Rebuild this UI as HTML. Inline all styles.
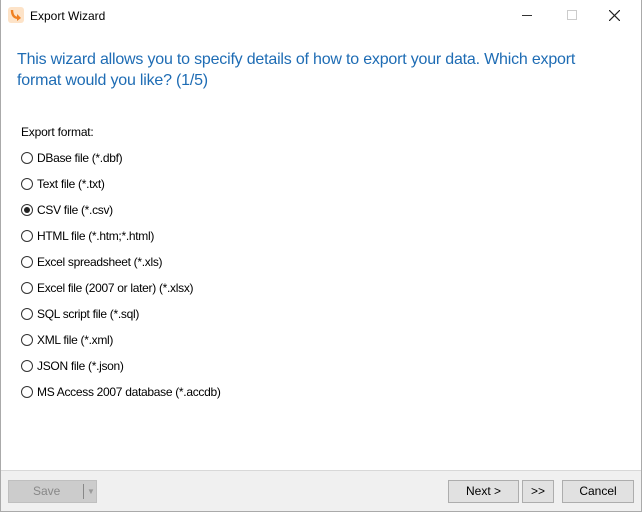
<!DOCTYPE html>
<html><head><style>
*{margin:0;padding:0;box-sizing:border-box}
body{width:642px;height:512px;background:#fff;font-family:"Liberation Sans",sans-serif;position:relative;overflow:hidden}
.win{position:absolute;left:0;top:0;width:642px;height:512px;border:1px solid #aaa;border-top:none}
.title{position:absolute;left:30px;top:9px;font-size:12px;color:#000}
.h{position:absolute;left:17px;top:49px;font-size:16px;line-height:21px;color:#1e6cb4;width:580px;letter-spacing:-0.2px}
.lbl{position:absolute;left:21px;top:125px;font-size:12px;color:#000;letter-spacing:-0.2px}
.r{position:absolute;left:21px;font-size:12px;color:#000;height:14px;line-height:14px;letter-spacing:-0.3px}
.r i{position:absolute;left:0;top:1px;width:12px;height:12px;border:1px solid #333;border-radius:50%}
.r i.on::after{content:"";position:absolute;left:2px;top:2px;width:6px;height:6px;border-radius:50%;background:#222}
.r span{position:absolute;left:16px;top:0;white-space:nowrap}
.foot{position:absolute;left:1px;top:470px;width:640px;height:41px;background:#f0f0f0;border-top:1px solid #d8d8d8}
.b{position:absolute;top:480px;height:23px;border:1px solid #adadad;background:#e1e1e1;font-size:12px;text-align:center;line-height:21px;color:#000}
</style></head><body>
<div class="win"></div>
<svg style="position:absolute;left:8px;top:7px" width="16" height="16"><rect width="16" height="16" rx="3" fill="#fde3c8"/><path d="M4 3 Q4 11 11 11" stroke="#f08020" stroke-width="2.4" fill="none"/><path d="M9 7 L13 11 L9 14" fill="#f08020"/></svg>
<div class="title">Export Wizard</div>
<div style="position:absolute;left:522px;top:15px;width:10px;height:1px;background:#333"></div>
<div style="position:absolute;left:567px;top:10px;width:10px;height:10px;border:1px solid #ccc"></div>
<svg style="position:absolute;left:609px;top:10px" width="11" height="11"><path d="M0 0L11 11M11 0L0 11" stroke="#222" stroke-width="1.2"/></svg>
<div class="h">This wizard allows you to specify details of how to export your data. Which export format would you like? (1/5)</div>
<div class="lbl">Export format:</div>
<div class="r" style="top:151px"><i></i><span>DBase file (*.dbf)</span></div>
<div class="r" style="top:177px"><i></i><span>Text file (*.txt)</span></div>
<div class="r" style="top:203px"><i class="on"></i><span>CSV file (*.csv)</span></div>
<div class="r" style="top:229px"><i></i><span>HTML file (*.htm;*.html)</span></div>
<div class="r" style="top:255px"><i></i><span>Excel spreadsheet (*.xls)</span></div>
<div class="r" style="top:281px"><i></i><span>Excel file (2007 or later) (*.xlsx)</span></div>
<div class="r" style="top:307px"><i></i><span>SQL script file (*.sql)</span></div>
<div class="r" style="top:333px"><i></i><span>XML file (*.xml)</span></div>
<div class="r" style="top:359px"><i></i><span>JSON file (*.json)</span></div>
<div class="r" style="top:385px"><i></i><span>MS Access 2007 database (*.accdb)</span></div>
<div class="foot"></div>
<div class="b" style="left:8px;width:89px;background:#cccccc;border-color:#bfbfbf;color:#888;text-align:left;padding-left:24px">Save<span style="position:absolute;left:74px;top:3px;width:1px;height:15px;background:#888"></span><span style="position:absolute;left:78px;top:0;font-size:8px;color:#999">▼</span></div>
<div class="b" style="left:448px;width:71px">Next &gt;</div>
<div class="b" style="left:522px;width:32px">&gt;&gt;</div>
<div class="b" style="left:562px;width:72px">Cancel</div>
</body></html>
